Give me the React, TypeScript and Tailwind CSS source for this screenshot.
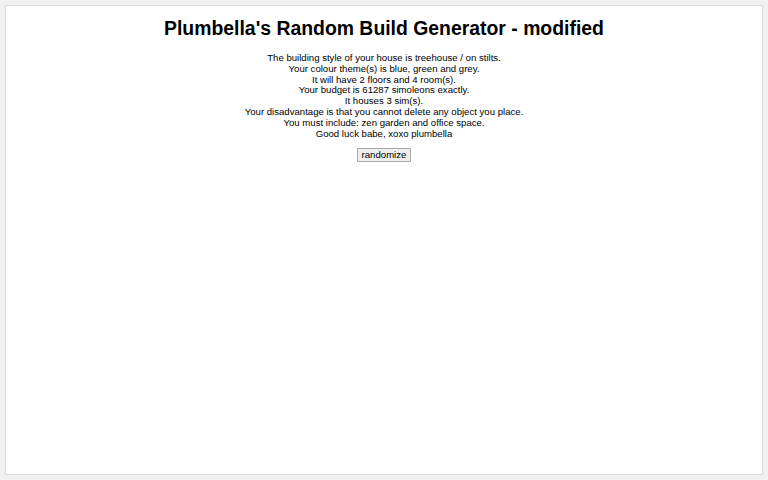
export default function App() {
  const lines = [
    'The building style of your house is treehouse / on stilts.',
    'Your colour theme(s) is blue, green and grey.',
    'It will have 2 floors and 4 room(s).',
    'Your budget is 61287 simoleons exactly.',
    'It houses 3 sim(s).',
    'Your disadvantage is that you cannot delete any object you place.',
    'You must include: zen garden and office space.',
    'Good luck babe, xoxo plumbella',
  ];

  return (
    <div className="h-[480px] w-[768px] bg-[#f1f1f1] p-[5px] font-['Liberation_Sans',Arial,sans-serif] text-black">
      <div className="flex h-full flex-col items-center border border-[#dcdcdc] bg-white">
        <h1 className="mt-[11px] text-[19.4px] font-bold leading-[22px]">
          Plumbella's Random Build Generator - modified
        </h1>
        <div className="mt-[14px] text-center text-[9.6px] leading-[10.8px]">
          {lines.map((l) => (
            <p key={l}>{l}</p>
          ))}
        </div>
        <button className="mt-[9px] border border-[#a9a9a9] bg-[#efefef] px-[4px] text-[9.6px] leading-[12px]">
          randomize
        </button>
      </div>
    </div>
  );
}
